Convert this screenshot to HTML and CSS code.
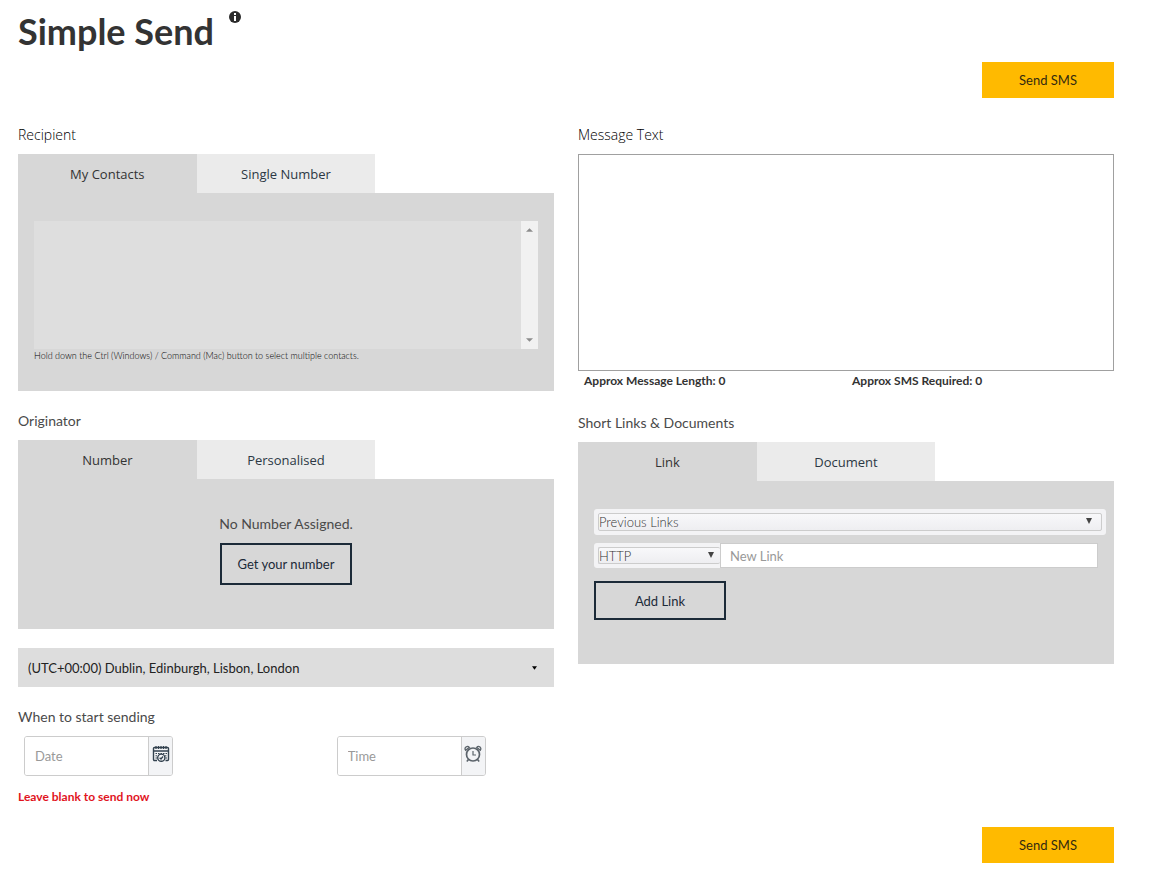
FILE: index.html
```html
<!DOCTYPE html>
<html lang="en">
<head>
  <meta charset="UTF-8" />
  <meta name="viewport" content="width=device-width, initial-scale=1.0"/>
  <title>Simple Send</title>
  <link rel="stylesheet" href="styles.css">
</head>
<body>
  <form class="page">
    <header class="page-header">
      <h1>Simple Send</h1>
      <svg class="info" viewBox="0 0 12 12" role="img" aria-label="Info">
        <circle cx="6" cy="6" r="6" fill="#2b2b2b"/>
        <path d="M5 2h2v2H5zM5 5h2v5H5z" fill="#fff"/>
      </svg>
    </header>

    <div class="actions">
      <button type="submit" class="btn btn-primary">Send SMS</button>
    </div>

    <main class="columns">
      <div class="column">
        <section>
          <h2 class="label open">Recipient</h2>
          <div class="tabs">
            <button type="button" class="tab active">My Contacts</button>
            <button type="button" class="tab">Single Number</button>
          </div>
          <div class="panel">
            <div class="list">
              <select class="list-box" multiple aria-label="My contacts"></select>
              <div class="scrollbar">
                <svg viewBox="0 0 8 4"><path d="M0 4l4-4 4 4z"/></svg>
                <svg viewBox="0 0 8 4"><path d="M0 0h8L4 4z"/></svg>
              </div>
            </div>
            <p class="hint">Hold down the Ctrl (Windows) / Command (Mac) button to select multiple contacts.</p>
          </div>
        </section>

        <section>
          <h2 class="label">Originator</h2>
          <div class="tabs">
            <button type="button" class="tab active">Number</button>
            <button type="button" class="tab">Personalised</button>
          </div>
          <div class="panel panel-number">
            <p class="label">No Number Assigned.</p>
            <button type="button" class="btn btn-outline">Get your number</button>
          </div>
        </section>

        <div class="timezone">
          <select class="timezone-select" aria-label="Time zone">
            <option>(UTC+00:00) Dublin, Edinburgh, Lisbon, London</option>
          </select>
          <svg class="caret" viewBox="0 0 6 4"><path d="M0 0h6L3 4z"/></svg>
        </div>

        <section>
          <h2 class="label">When to start sending</h2>
          <div class="schedule">
            <div class="picker">
              <input type="text" class="picker-input" placeholder="Date" aria-label="Date">
              <button type="button" class="picker-btn" aria-label="Pick a date">
                <svg viewBox="0 0 18 18" fill="none" stroke="#33424f">
                  <path d="M5 15.5H2.5a1 1 0 0 1-1-1v-11a1 1 0 0 1 1-1h13a1 1 0 0 1 1 1v11a1 1 0 0 1-1 1h-2" stroke-width="1.4"/>
                  <path d="M1.5 6h15" stroke-width="1.4"/>
                  <path d="M4 1v3M6.500 1v3M9 1v3M11.500 1v3M14 1v3" stroke-width="1.2"/>
                  <path d="M3.500 8.500h11.500M3.500 10.800h2M13 10.800h2M3.500 13h1.500M13.500 13h1.500" stroke-dasharray="1.5 1"/>
                  <circle cx="9.300" cy="12.700" r="3.600" stroke-width="1.4"/>
                  <path d="M7.600 12.700l1.400 1.300 2-2.500" stroke-width="1.3"/>
                </svg>
              </button>
            </div>
            <div class="picker">
              <input type="text" class="picker-input" placeholder="Time" aria-label="Time">
              <button type="button" class="picker-btn" aria-label="Pick a time">
                <svg viewBox="0 0 18 18" fill="none" stroke="#5c646b">
                  <circle cx="9" cy="9.500" r="6.500" stroke-width="1.7"/>
                  <path d="M9 6v4h3" stroke-width="1.2"/>
                  <path d="M1.700 5.300a2.300 2.300 0 0 1 3.600-3zM16.300 5.300a2.300 2.300 0 0 0-3.600-3z" stroke-width="1.3"/>
                  <path d="M4.500 14.500l-1.700 2M13.500 14.500l1.700 2" stroke-width="1.6"/>
                </svg>
              </button>
            </div>
          </div>
          <p class="warning">Leave blank to send now</p>
        </section>
      </div>

      <div class="column">
        <section>
          <label class="label open" for="message">Message Text</label>
          <textarea class="message" id="message"></textarea>
          <div class="counters">
            <span>Approx Message Length: 0</span>
            <span>Approx SMS Required: 0</span>
          </div>
        </section>

        <section>
          <h2 class="label">Short Links &amp; Documents</h2>
          <div class="tabs">
            <button type="button" class="tab active">Link</button>
            <button type="button" class="tab">Document</button>
          </div>
          <div class="panel panel-links">
            <div class="select-box">
              <select class="small-select" aria-label="Previous links">
                <option>Previous Links</option>
              </select>
              <svg class="caret" viewBox="0 0 6 6"><path d="M0 0h6L3 6z"/></svg>
            </div>
            <div class="link-row">
              <div class="select-box protocol">
                <select class="small-select" aria-label="Protocol">
                  <option>HTTP</option>
                </select>
                <svg class="caret" viewBox="0 0 6 6"><path d="M0 0h6L3 6z"/></svg>
              </div>
              <input type="text" class="link-input" placeholder="New Link" aria-label="New link">
            </div>
            <button type="button" class="btn btn-outline btn-add">Add Link</button>
          </div>
        </section>
      </div>
    </main>

    <div class="actions actions-bottom">
      <button type="submit" class="btn btn-primary">Send SMS</button>
    </div>
  </form>
</body>
</html>
```
FILE: styles.css
```css
* {
  box-sizing: border-box;
}

body {
  margin: 0;
  background: #fff;
  color: #333;
  font-family: Lato, sans-serif;
  font-size: 13px;
}

button,
input,
select,
textarea {
  font-family: inherit;
  margin: 0;
  border-radius: 0;
}

h1,
h2,
p {
  margin: 0;
}

.page {
  padding: 10px 44px 11px 18px;
}

.page-header {
  display: flex;
  align-items: flex-start;
  gap: 15px;
}

h1 {
  font-size: 36px;
  font-weight: 700;
  line-height: 42px;
}

.info {
  width: 12px;
  height: 12px;
  margin-top: 1px;
}

.actions {
  display: flex;
  justify-content: flex-end;
  padding: 10px 0 26px;
}

.actions-bottom {
  padding: 20px 0 0;
}

.btn {
  width: 132px;
  padding: 0;
  font-size: 13px;
  cursor: pointer;
}

.btn-primary {
  height: 36px;
  border: none;
  background: #ffba00;
  color: #332a10;
}

.btn-outline {
  height: 42px;
  border: 2px solid #1b2a38;
  background: transparent;
  color: #1b2a38;
}

.columns {
  display: grid;
  grid-template-columns: 1fr 1fr;
  gap: 24px;
}

.column {
  display: flex;
  flex-direction: column;
  gap: 19px;
}

.label {
  display: block;
  margin-bottom: 9px;
  font-size: 14px;
  font-weight: 400;
  line-height: 21px;
  color: #4a4a4a;
}

.open {
  font-family: "Open Sans", sans-serif;
  font-weight: 300;
  color: #000;
}

.tabs {
  display: flex;
}

.tab {
  width: calc(100% / 3);
  height: 39px;
  padding: 0;
  border: none;
  background: #ebebeb;
  color: #2c3844;
  font-family: "Open Sans", sans-serif;
  font-size: 13px;
  cursor: pointer;
}

.tab.active {
  background: #d7d7d7;
  color: #333;
}

.panel {
  padding: 28px 16px;
  background: #d7d7d7;
}

.list {
  display: flex;
  height: 128px;
}

.list-box {
  flex: 1;
  min-width: 0;
  height: 100%;
  border: none;
  background: #dedede;
  overflow: hidden;
}

.scrollbar {
  display: flex;
  flex-direction: column;
  justify-content: space-between;
  align-items: center;
  width: 17px;
  padding: 7px 0;
  background: #f1f1f1;
}

.scrollbar svg {
  width: 7px;
  height: 4px;
  fill: #8c8c8c;
}

.hint {
  color: #000;
  font-size: 9px;
  font-weight: 300;
  line-height: 14px;
}

.panel-number {
  display: flex;
  flex-direction: column;
  align-items: center;
  padding: 34px 16px 44px;
}

.timezone {
  position: relative;
}

.timezone-select {
  appearance: none;
  display: block;
  width: 100%;
  height: 39px;
  padding: 0 10px;
  border: none;
  background: #ddd;
  color: #222;
  font-size: 13px;
}

.caret {
  position: absolute;
  top: 50%;
  right: 17px;
  width: 5px;
  height: 4px;
  margin-top: -2px;
  pointer-events: none;
}

.schedule {
  display: grid;
  grid-template-columns: 7fr 5fr;
}

.picker {
  display: flex;
  width: 149px;
  height: 40px;
  margin-left: 6px;
  border: 1px solid #ccc;
  border-radius: 3px;
  overflow: hidden;
}

.picker-input {
  flex: 1;
  min-width: 0;
  padding: 0 10px;
  border: none;
  font-size: 13px;
}

.picker-btn {
  width: 24px;
  padding: 0 0 4px;
  border: none;
  border-left: 1px solid #ccc;
  background: #f3f4f6;
  cursor: pointer;
}

.picker-btn svg {
  display: block;
  width: 18px;
  height: 18px;
  margin: 0 auto;
}

::placeholder {
  color: #999;
  opacity: 1;
}

.warning {
  margin-top: 11px;
  color: #e1141e;
  font-size: 12px;
  font-weight: 700;
  line-height: 20px;
}

.message {
  display: block;
  width: 100%;
  height: 217px;
  border: 1px solid #a0a0a0;
  resize: none;
}

.counters {
  display: grid;
  grid-template-columns: 1fr 1fr;
  margin: 0 0 2px;
  font-size: 12px;
  font-weight: 700;
  line-height: 20px;
}

.counters span {
  padding-left: 6px;
}

.panel-links {
  padding: 28px 8px 44px 16px;
}

.select-box {
  position: relative;
  padding: 4px;
  border-radius: 3px;
  background: #f3f3f5;
}

.small-select {
  appearance: none;
  display: block;
  width: 100%;
  height: 18px;
  padding: 0;
  border: 1px solid #ccc;
  border-radius: 2px;
  background: linear-gradient(#f8f8fa, #eeeef1);
  color: #333;
  font-size: 13px;
  font-weight: 300;
}

.select-box .caret {
  right: 14px;
  width: 6px;
  height: 6px;
  margin-top: -4px;
  fill: #444;
}

.link-row {
  display: flex;
  height: 25px;
  margin: 8px 8px 13px 0;
}

.protocol {
  width: 126px;
  padding-right: 0;
  border-radius: 3px 0 0 3px;
}

.protocol .small-select {
  height: 17px;
  border-right: none;
}

.select-box.protocol .caret {
  right: 6px;
}

.link-input {
  flex: 1;
  min-width: 0;
  padding: 0 9px;
  border: 1px solid #ccc;
  font-size: 13px;
}

.btn-add {
  height: 39px;
}
```
